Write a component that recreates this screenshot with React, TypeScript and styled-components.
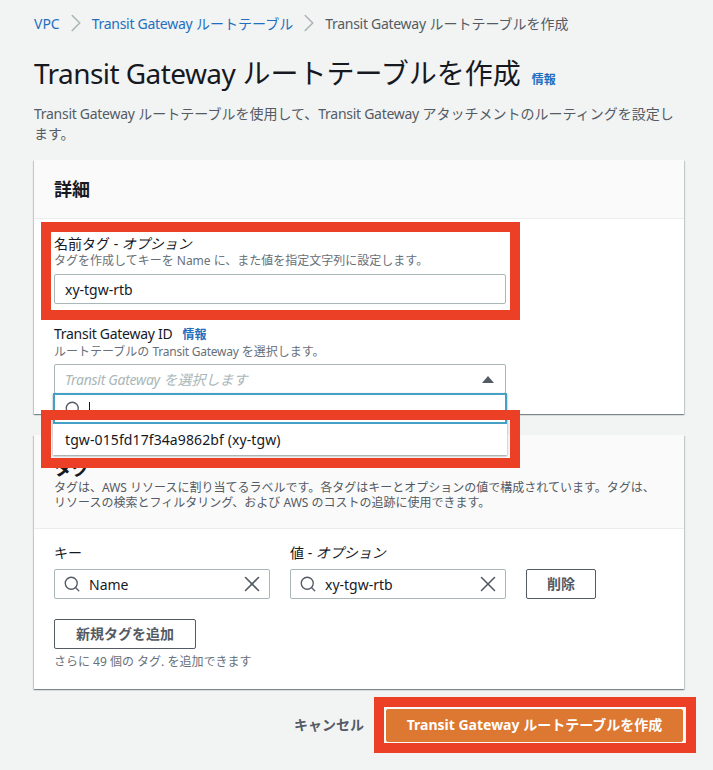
import React from 'react';
import styled, { createGlobalStyle } from 'styled-components';
import { ChevronRight, Search, X } from 'lucide-react';

const GlobalStyle = createGlobalStyle`
    html, body {
        margin: 0;
        padding: 0;
        background: #f2f3f3;
    }
    body {
        font-family: 'Noto Sans', 'Noto Sans CJK JP', sans-serif;
        color: #16191f;
    }
    * {
        box-sizing: border-box;
    }
`;

const Page = styled.div`
    position: relative;
    width: 713px;
    height: 770px;
    overflow: hidden;
    padding: 13px 29px 0 34px;
`;

// "Transit Gateway" runs a little narrower than the rest of the text
const Latin = styled.span`
    letter-spacing: -0.02em;
`;

const Breadcrumbs = styled.nav`
    display: flex;
    align-items: center;
    height: 20px;
    font-size: 14px;
    color: #545b64;

    svg {
        color: #aab7b8;
        margin: -5px 1px;
    }
`;

const Crumb = styled.span`
    color: #1f6fbf;
`;

const TitleRow = styled.div`
    display: flex;
    align-items: baseline;
    margin-top: 16px;
    height: 48px;
`;

const Title = styled.h1`
    margin: 0;
    font-size: 28px;
    font-weight: 400;
    line-height: 48px;
`;

const InfoLink = styled.a<{ $gap?: number }>`
    color: #1f6fbf;
    font-size: 12px;
    font-weight: 700;
    margin-left: ${(p) => p.$gap ?? 11}px;
`;

const Description = styled.p`
    margin: 7px 0 0;
    font-size: 14px;
    line-height: 20px;
    color: #545b64;
`;

const Card = styled.section<{ $offset?: number }>`
    background: #fff;
    width: 650px;
    margin-top: ${(p) => p.$offset ?? 0}px;
    box-shadow: 0 1px 1px 0 rgba(0, 28, 36, 0.3), 1px 1px 1px 0 rgba(0, 28, 36, 0.15),
        -1px 1px 1px 0 rgba(0, 28, 36, 0.15);
`;

const CardHeader = styled.header<{ $tall?: boolean }>`
    background: #fafafa;
    border-bottom: 1px solid #eaeded;
    padding: ${(p) => (p.$tall ? '21px 20px 0' : '17px 20px 0')};
    height: ${(p) => (p.$tall ? '94px' : '59px')};
`;

const CardTitle = styled.h2`
    margin: 0;
    font-size: 18px;
    line-height: 24px;
    font-weight: 700;
`;

const CardNote = styled.p`
    margin: 0;
    font-size: 12px;
    line-height: 15px;
    color: #545b64;
`;

const DetailsBody = styled.div`
    padding: 16px 20px 0;
    height: 195px;
    display: flex;
    flex-direction: column;
`;

const Field = styled.div`
    display: flex;
    flex-direction: column;
    margin-bottom: 21px;
`;

const Label = styled.label`
    font-size: 14px;
    line-height: 18px;
    color: #16191f;

    em {
        font-style: italic;
    }
`;

const Hint = styled.span`
    font-size: 12px;
    line-height: 15px;
    color: #687078;
`;

const TextBox = styled.div`
    display: flex;
    align-items: center;
    width: 452px;
    height: 30px;
    margin-top: 6px;
    padding: 0 10px;
    background: #fff;
    border: 1px solid #aab7b8;
    border-radius: 2px;
    font-size: 14px;
    color: #16191f;
`;

const SelectBox = styled(TextBox)`
    justify-content: space-between;
    margin-top: 5px;
    color: #aab7b8;
    font-style: italic;
`;

const Caret = styled.span`
    width: 0;
    height: 0;
    margin-right: 1px;
    border-left: 6px solid transparent;
    border-right: 6px solid transparent;
    border-bottom: 7px solid #545b64;
`;

const Dropdown = styled.div`
    position: absolute;
    left: 53px;
    top: 393px;
    width: 454px;
    background: #fff;
    box-shadow: 0 1px 2px rgba(0, 28, 36, 0.45);
    z-index: 2;
`;

const DropdownSearch = styled.div`
    display: flex;
    align-items: center;
    height: 31px;
    padding-left: 9px;
    border: 2px solid #44a0c7;
    color: #545b64;
`;

const Cursor = styled.span`
    width: 1px;
    height: 14px;
    margin-left: 7px;
    background: #16191f;
`;

const DropdownOption = styled.div`
    display: flex;
    align-items: center;
    height: 31px;
    padding-left: 12px;
    font-size: 14px;
    letter-spacing: 0.1px;
    color: #16191f;
`;

const Spacer = styled.div`
    height: 21px;
`;

const TagsBody = styled.div`
    padding: 15px 20px 0;
    height: 160px;
`;

const TagRow = styled.div`
    display: grid;
    grid-template-columns: 216px 216px auto;
    column-gap: 20px;
    align-items: end;
    justify-content: start;
`;

const TagField = styled.div`
    display: flex;
    flex-direction: column;
`;

const TagInput = styled(TextBox)`
    width: 216px;
    margin-top: 7px;
    padding: 0 4px 0 8px;
    color: #16191f;

    svg {
        flex: none;
    }

    span {
        flex: 1;
        margin-left: 8px;
    }
`;

const Button = styled.button`
    display: inline-flex;
    align-items: center;
    justify-content: center;
    height: 30px;
    padding: 0 20px 2px;
    background: #fff;
    border: 1px solid #545b64;
    border-radius: 2px;
    font-family: inherit;
    font-size: 14px;
    font-weight: 700;
    color: #545b64;
`;

const AddButton = styled(Button)`
    margin-top: 20px;
    width: 142px;
    padding: 0 0 2px;
`;

const LimitNote = styled(Hint)`
    display: block;
    margin-top: 5px;
`;

const Footer = styled.div`
    display: flex;
    align-items: center;
    justify-content: flex-end;
    width: 650px;
    height: 33px;
    margin-top: 20px;
    padding-right: 1px;
`;

const CancelLink = styled.a`
    font-size: 14px;
    font-weight: 700;
    color: #545b64;
    margin: 0 22px 3px 0;
`;

const SubmitButton = styled(Button)`
    width: 297px;
    height: 33px;
    padding: 0 0 3px;
    background: #dd7833;
    border-color: #dd7833;
    color: #fff;
    box-shadow: 0 0 0 2px #fafafa;
`;

const Highlight = styled.div<{ $left: number; $top: number; $width: number; $height: number }>`
    position: absolute;
    left: ${(p) => p.$left}px;
    top: ${(p) => p.$top}px;
    width: ${(p) => p.$width}px;
    height: ${(p) => p.$height}px;
    border: 10px solid #eb4025;
    z-index: 3;
    pointer-events: none;
`;

export default function App() {
    return (
        <>
            <GlobalStyle />
            <Page>
                <Breadcrumbs>
                    <Crumb>VPC</Crumb>
                    <ChevronRight size={30} strokeWidth={1.3} />
                    <Crumb>
                        <Latin>Transit Gateway</Latin> ルートテーブル
                    </Crumb>
                    <ChevronRight size={30} strokeWidth={1.3} />
                    <span>
                        <Latin>Transit Gateway</Latin> ルートテーブルを作成
                    </span>
                </Breadcrumbs>
                <TitleRow>
                    <Title>
                        <Latin>Transit Gateway</Latin> ルートテーブルを作成
                    </Title>
                    <InfoLink>情報</InfoLink>
                </TitleRow>
                <Description>
                    <Latin>Transit Gateway</Latin> ルートテーブルを使用して、<Latin>Transit Gateway</Latin>{' '}
                    アタッチメントのルーティングを設定し
                    <br />
                    ます。
                </Description>
                <Card $offset={16}>
                    <CardHeader>
                        <CardTitle>詳細</CardTitle>
                    </CardHeader>
                    <DetailsBody>
                        <Field>
                            <Label>
                                名前タグ - <em>オプション</em>
                            </Label>
                            <Hint>タグを作成してキーを Name に、また値を指定文字列に設定します。</Hint>
                            <TextBox>xy-tgw-rtb</TextBox>
                        </Field>
                        <Field>
                            <Label>
                                <Latin>Transit Gateway ID</Latin>
                                <InfoLink $gap={10}>情報</InfoLink>
                            </Label>
                            <Hint>
                                ルートテーブルの <Latin>Transit Gateway</Latin> を選択します。
                            </Hint>
                            <SelectBox>
                                <span>
                                    <Latin>Transit Gateway</Latin> を選択します
                                </span>
                                <Caret />
                            </SelectBox>
                        </Field>
                    </DetailsBody>
                </Card>
                <Spacer />
                <Card>
                    <CardHeader $tall>
                        <CardTitle>タグ</CardTitle>
                        <CardNote>
                            タグは、AWS リソースに割り当てるラベルです。各タグはキーとオプションの値で構成されています。タグは、リソースの検索とフィルタリング、および AWS のコストの追跡に使用できます。
                        </CardNote>
                    </CardHeader>
                    <TagsBody>
                        <TagRow>
                            <TagField>
                                <Label>キー</Label>
                                <TagInput>
                                    <Search size={18} strokeWidth={1.8} color="#545b64" />
                                    <span>Name</span>
                                    <X size={26} strokeWidth={1.5} color="#545b64" />
                                </TagInput>
                            </TagField>
                            <TagField>
                                <Label>
                                    値 - <em>オプション</em>
                                </Label>
                                <TagInput>
                                    <Search size={18} strokeWidth={1.8} color="#545b64" />
                                    <span>xy-tgw-rtb</span>
                                    <X size={26} strokeWidth={1.5} color="#545b64" />
                                </TagInput>
                            </TagField>
                            <Button>削除</Button>
                        </TagRow>
                        <AddButton>新規タグを追加</AddButton>
                        <LimitNote>さらに 49 個の タグ. を追加できます</LimitNote>
                    </TagsBody>
                </Card>
                <Footer>
                    <CancelLink>キャンセル</CancelLink>
                    <SubmitButton>Transit Gateway ルートテーブルを作成</SubmitButton>
                </Footer>
                <Dropdown>
                    <DropdownSearch>
                        <Search size={18} strokeWidth={1.8} />
                        <Cursor />
                    </DropdownSearch>
                    <DropdownOption>tgw-015fd17f34a9862bf (xy-tgw)</DropdownOption>
                </Dropdown>
                <Highlight $left={41} $top={222} $width={479} $height={98} />
                <Highlight $left={41} $top={410} $width={479} $height={58} />
                <Highlight $left={374} $top={697} $width={322} $height={56} />
            </Page>
        </>
    );
}
